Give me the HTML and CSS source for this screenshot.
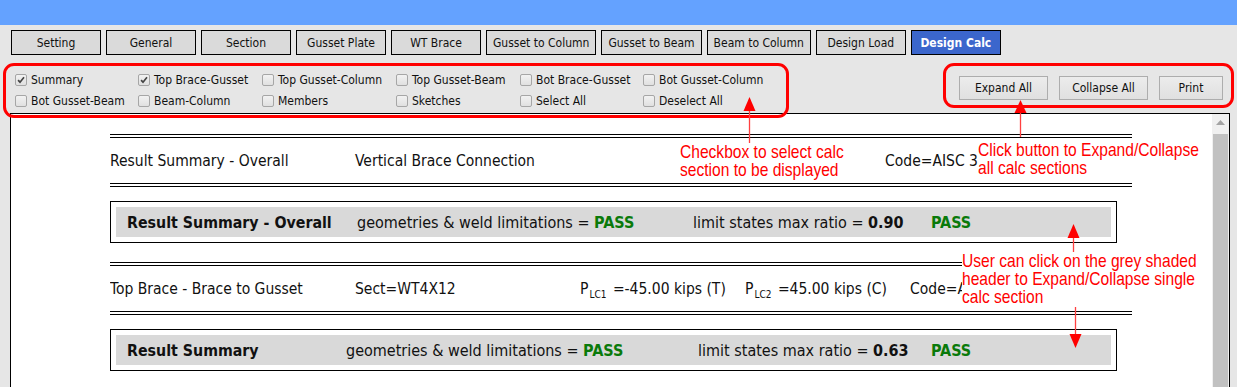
FILE: index.html
```html
<!DOCTYPE html>
<html>
<head>
<meta charset="utf-8">
<link rel="stylesheet" href="styles.css">
</head>
<body>
<div class="topbar"></div>
<nav class="tabs">
  <button class="tab">Setting</button>
  <button class="tab">General</button>
  <button class="tab">Section</button>
  <button class="tab">Gusset Plate</button>
  <button class="tab">WT Brace</button>
  <button class="tab">Gusset to Column</button>
  <button class="tab">Gusset to Beam</button>
  <button class="tab">Beam to Column</button>
  <button class="tab">Design Load</button>
  <button class="tab active">Design Calc</button>
</nav>
<div class="toolbar">
  <div class="checks">
    <label class="check"><span class="cb on"><svg viewBox="0 0 12 12"><path d="M2.5 6.2 L4.8 8.6 L9.6 2.8" /></svg></span>Summary</label>
    <label class="check"><span class="cb on"><svg viewBox="0 0 12 12"><path d="M2.5 6.2 L4.8 8.6 L9.6 2.8" /></svg></span>Top Brace-Gusset</label>
    <label class="check"><span class="cb"></span>Top Gusset-Column</label>
    <label class="check"><span class="cb"></span>Top Gusset-Beam</label>
    <label class="check"><span class="cb"></span>Bot Brace-Gusset</label>
    <label class="check"><span class="cb"></span>Bot Gusset-Column</label>
    <label class="check"><span class="cb"></span>Bot Gusset-Beam</label>
    <label class="check"><span class="cb"></span>Beam-Column</label>
    <label class="check"><span class="cb"></span>Members</label>
    <label class="check"><span class="cb"></span>Sketches</label>
    <label class="check"><span class="cb"></span>Select All</label>
    <label class="check"><span class="cb"></span>Deselect All</label>
  </div>
  <div class="actions">
    <button class="btn btn-wide">Expand All</button>
    <button class="btn btn-wide">Collapse All</button>
    <button class="btn">Print</button>
  </div>
</div>
<div class="panel">
  <div class="content">
    <div class="calc-head head-overall">
      <span>Result Summary - Overall</span>
      <span>Vertical Brace Connection</span>
      <span>Code=AISC 360-16</span>
    </div>
    <div class="summary">
      <div class="bar bar-overall">
        <b class="title">Result Summary - Overall</b>
        <span>geometries &amp; weld limitations = <b class="pass">PASS</b></span>
        <span>limit states max ratio = <b class="num">0.90</b></span>
        <b class="pass">PASS</b>
      </div>
    </div>
    <div class="calc-head head-brace">
      <span>Top Brace - Brace to Gusset</span>
      <span>Sect=WT4X12</span>
      <span>P<sub>LC1</sub> =-45.00 kips (T)</span>
      <span>P<sub>LC2</sub> =45.00 kips (C)</span>
      <span>Code=AISC 360-16</span>
    </div>
    <div class="summary">
      <div class="bar bar-brace">
        <b class="title">Result Summary</b>
        <span>geometries &amp; weld limitations = <b class="pass">PASS</b></span>
        <span>limit states max ratio = <b class="num">0.63</b></span>
        <b class="pass">PASS</b>
      </div>
    </div>
  </div>
  <div class="scrollbar">
    <div class="sb-arrow"><svg viewBox="0 0 9 5" width="9" height="5"><path d="M0 5 L4.5 0 L9 5 Z"/></svg></div>
    <div class="sb-thumb"></div>
  </div>
</div>

<div class="mark mark-checks"></div>
<div class="mark mark-actions"></div>
<svg class="arrows" width="1237" height="387" viewBox="0 0 1237 387">
  <g stroke="#ff4040" stroke-width="1.3">
    <line x1="749.5" y1="108" x2="749.5" y2="144"/>
    <line x1="1020.5" y1="110" x2="1020.5" y2="137"/>
    <line x1="1073.5" y1="236" x2="1073.5" y2="254"/>
    <line x1="1075.5" y1="307" x2="1075.5" y2="336"/>
  </g>
  <g fill="#ff0000">
    <polygon points="749.5,97 743.5,111 755.5,111"/>
    <polygon points="1020.5,100 1014.5,113 1026.5,113"/>
    <polygon points="1073.5,224 1067.5,238 1079.5,238"/>
    <polygon points="1075.5,348 1069.5,334 1081.5,334"/>
  </g>
</svg>
<div class="note note-checks">Checkbox to select calc<br>section to be displayed</div>
<div class="note note-actions">Click button to Expand/Collapse<br>all calc sections</div>
<div class="note note-header">User can click on the grey shaded<br>header to Expand/Collapse single<br>calc section</div>
</body>
</html>
```
FILE: styles.css
```css
* { box-sizing: border-box; }

html, body { height: 100%; }

body {
  margin: 0;
  width: 1237px;
  height: 387px;
  overflow: hidden;
  position: relative;
  background: #e6e6e6;
  font-family: "DejaVu Sans Condensed", "DejaVu Sans", sans-serif;
  font-size: 12px;
  color: #111;
  display: flex;
  flex-direction: column;
}

.topbar {
  height: 25px;
  flex: none;
  background: #64a2ff;
}

.tabs {
  display: flex;
  gap: 5px;
  padding: 5px 0 0 11px;
  flex: none;
}

.tab {
  height: 25px;
  min-width: 90px;
  padding: 0 6px;
  border: 1px solid #000;
  background: #dadada;
  font: inherit;
  color: #111;
}

.tab.active {
  background: #3b66cc;
  color: #fff;
  font-weight: bold;
}

.toolbar {
  flex: none;
  height: 58px;
  display: flex;
  justify-content: space-between;
}

.checks {
  display: grid;
  grid-template-columns: 123px 124px 134px 124px 123px auto;
  grid-auto-rows: 14px;
  row-gap: 7px;
  padding: 18px 0 0 15px;
}

.check {
  display: flex;
  align-items: center;
  gap: 4px;
  line-height: 14px;
  white-space: nowrap;
}

.cb {
  width: 12px;
  height: 12px;
  border: 1px solid #a6a6a6;
  border-radius: 2px;
  background: linear-gradient(#f2f2f2, #e0e0e0);
  display: inline-flex;
}

.cb svg {
  width: 10px;
  height: 10px;
  fill: none;
  stroke: #444;
  stroke-width: 2;
}

.actions {
  display: flex;
  gap: 11px;
  padding: 21px 14px 0 0;
}

.btn {
  height: 24px;
  width: 64px;
  border: 1px solid #adadad;
  background: linear-gradient(#ececec, #e0e0e0);
  font: inherit;
  color: #111;
  padding: 0;
}

.btn-wide { width: 89px; }

.panel {
  flex: 1;
  margin: 0 7px 0 10px;
  border: 1px solid #000;
  border-bottom: none;
  background: #fff;
  display: flex;
  min-height: 0;
}

.content {
  flex: 1;
  padding: 20px 0 0 99px;
  font-size: 15.5px;
  color: #111;
}

.calc-head {
  width: 1022px;
  height: 53px;
  border-top: 4px double #000;
  border-bottom: 4px double #000;
  display: grid;
  align-items: center;
  white-space: nowrap;
  overflow: hidden;
}

.head-overall { grid-template-columns: 245px 530px auto; }
.head-brace { grid-template-columns: 245px 225px 165px 165px auto; }

.calc-head sub {
  font-size: 10px;
  vertical-align: -4px;
  line-height: 0;
  margin: 0 2px 0 1px;
}

.summary {
  width: 1007px;
  border: 1px solid #000;
  padding: 5px;
  margin: 14px 0 19px;
}

.bar {
  height: 30px;
  background: #d9d9d9;
  display: grid;
  align-items: center;
  padding-left: 11px;
  white-space: nowrap;
  font-size: 16px;
}

.bar-overall { grid-template-columns: 230px 336px 238px auto; }
.bar-brace { grid-template-columns: 219px 352px 233px auto; }

.title { font-weight: bold; font-size: 15.8px; }
.pass { color: #0a7a0a; font-weight: bold; }
.num { font-weight: bold; }

.scrollbar {
  width: 17px;
  flex: none;
  background: #f0f0f0;
  display: flex;
  flex-direction: column;
  align-items: center;
}

.sb-arrow {
  height: 17px;
  display: flex;
  align-items: center;
  justify-content: center;
}

.sb-arrow svg { fill: #a3a3a3; }

.sb-thumb {
  width: 15px;
  flex: 1;
  background: #c1c1c1;
  margin-top: 3px;
}

/* annotations drawn over the screenshot */
.mark {
  position: absolute;
  border: 3px solid #ff0000;
  border-radius: 11px;
}

.mark-checks { left: 3px; top: 63px; width: 786px; height: 55px; }
.mark-actions { left: 943px; top: 63px; width: 291px; height: 45px; }

.arrows {
  position: absolute;
  left: 0;
  top: 0;
}

.note {
  position: absolute;
  background: #fff;
  color: #ff0000;
  font-family: "Liberation Sans", Arial, sans-serif;
  font-size: 19px;
  line-height: 18px;
  white-space: nowrap;
  transform: scaleX(0.82);
  transform-origin: 0 0;
  padding-bottom: 1px;
}

.note-checks { left: 680px; top: 143px; }
.note-actions { left: 978px; top: 141px; }
.note-header { left: 962px; top: 252px; }
```
